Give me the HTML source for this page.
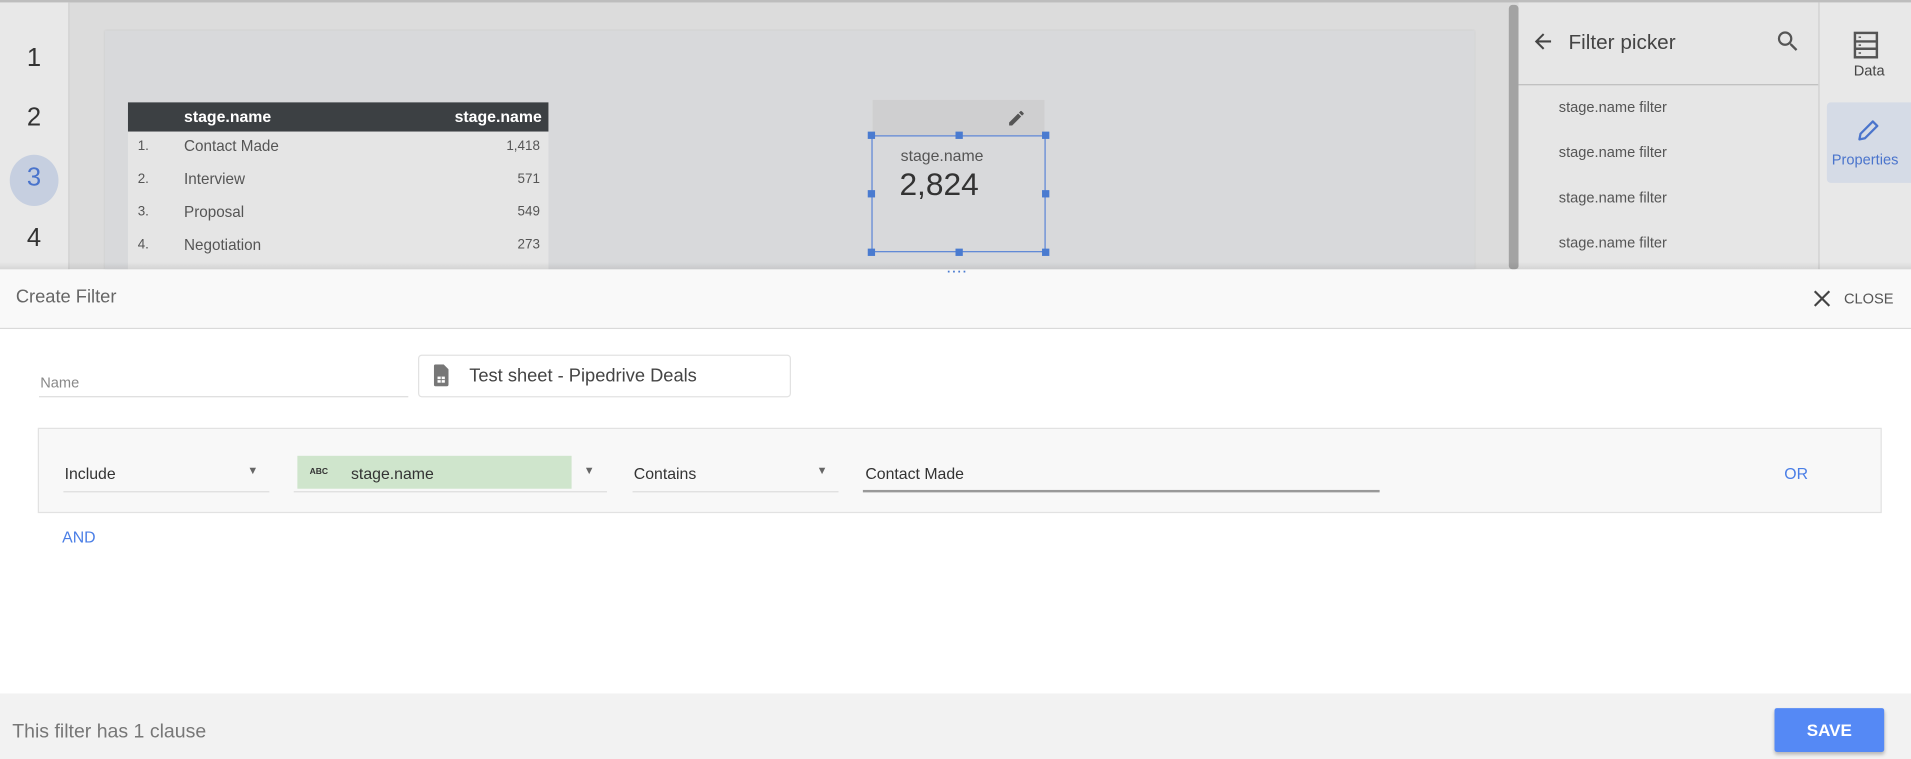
<!DOCTYPE html>
<html><head><meta charset="utf-8"><style>
*{box-sizing:border-box;margin:0;padding:0}
html,body{width:1911px;height:759px;overflow:hidden;background:#fff;font-family:"Liberation Sans",sans-serif}
#w{position:absolute;left:0;top:0;width:1568px;height:623px;transform:scale(1.21875);transform-origin:0 0}
.a{position:absolute}
.t{position:absolute;white-space:nowrap}
</style></head><body><div id="w">
<div class="a" style="left:0;top:0;width:1568px;height:221px;background:#dcdcdc;border-top:2px solid #bdbdbd"></div>
<div class="a" style="left:0;top:2px;width:57px;height:219px;background:#e8e8e8;border-right:1px solid #cfcfcf"></div>
<div class="t" style="left:22px;top:36px;font-size:21px;color:#333">1</div>
<div class="t" style="left:22px;top:85px;font-size:21px;color:#333">2</div>
<div class="a" style="left:8px;top:127px;width:40px;height:42px;border-radius:50%;background:#c6cfe0"></div>
<div class="t" style="left:22px;top:134px;font-size:21px;color:#4a74cc">3</div>
<div class="t" style="left:22px;top:184px;font-size:21px;color:#333">4</div>
<div class="a" style="left:86px;top:25px;width:1124px;height:196px;background:#d8d9db;box-shadow:0 0 2px rgba(0,0,0,.12)"></div>
<div class="a" style="left:105px;top:84px;width:345px;height:24px;background:#3c4043"></div>
<div class="t" style="left:151px;top:88px;font-size:13px;font-weight:bold;color:#fff">stage.name</div>
<div class="t" style="left:373px;top:88px;font-size:13px;font-weight:bold;color:#fff">stage.name</div>
<div class="a" style="left:105px;top:108px;width:345px;height:113px;background:#e5e5e5"></div>
<div class="t" style="left:113px;top:107px;font-size:11px;color:#555;line-height:27px">1.<br>2.<br>3.<br>4.</div>
<div class="t" style="left:151px;top:107px;font-size:12.5px;color:#555;line-height:27px">Contact Made<br>Interview<br>Proposal<br>Negotiation</div>
<div class="t" style="left:400px;top:107px;width:43px;text-align:right;font-size:11px;color:#555;line-height:27px">1,418<br>571<br>549<br>273</div>
<div class="a" style="left:716px;top:82px;width:141px;height:29px;background:#cfcfd0"></div>
<svg class="a" style="left:826px;top:89px" width="16" height="16" viewBox="0 0 24 24"><path d="M3 17.25V21h3.75L17.81 9.94l-3.75-3.75L3 17.25zM20.71 7.04a1 1 0 000-1.41l-2.34-2.34a1 1 0 00-1.41 0l-1.83 1.83 3.75 3.75 1.83-1.83z" fill="#555"/></svg>
<div class="a" style="left:715px;top:111px;width:143px;height:96px;border:1.5px solid #5b85d6"></div>
<div class="a" style="left:712px;top:108px;width:6px;height:6px;background:#4a7bd0"></div>
<div class="a" style="left:784px;top:108px;width:6px;height:6px;background:#4a7bd0"></div>
<div class="a" style="left:855px;top:108px;width:6px;height:6px;background:#4a7bd0"></div>
<div class="a" style="left:712px;top:156px;width:6px;height:6px;background:#4a7bd0"></div>
<div class="a" style="left:855px;top:156px;width:6px;height:6px;background:#4a7bd0"></div>
<div class="a" style="left:712px;top:204px;width:6px;height:6px;background:#4a7bd0"></div>
<div class="a" style="left:784px;top:204px;width:6px;height:6px;background:#4a7bd0"></div>
<div class="a" style="left:855px;top:204px;width:6px;height:6px;background:#4a7bd0"></div>
<div class="t" style="left:739px;top:120px;font-size:13px;color:#555">stage.name</div>
<div class="t" style="left:738px;top:136px;font-size:26px;color:#333">2,824</div>
<div class="a" style="left:1238px;top:4px;width:8px;height:217px;background:#a3a3a3;border-radius:3px"></div>
<div class="a" style="left:1246px;top:2px;width:246px;height:219px;background:#e6e6e6"></div>
<svg class="a" style="left:1256px;top:24px" width="20" height="20" viewBox="0 0 24 24"><path d="M20 11H7.83l5.59-5.59L12 4l-8 8 8 8 1.41-1.41L7.83 13H20v-2z" fill="#444"/></svg>
<div class="t" style="left:1287px;top:25px;font-size:17px;color:#444">Filter picker</div>
<svg class="a" style="left:1456px;top:23px" width="22" height="22" viewBox="0 0 24 24"><path d="M15.5 14h-.79l-.28-.27A6.47 6.47 0 0016 9.5 6.5 6.5 0 109.5 16c1.61 0 3.09-.59 4.230-1.57l.27.28v.79l5 4.99L20.49 19l-4.99-5zm-6 0C7.01 14 5 11.99 5 9.5S7.01 5 9.5 5 14 7.01 14 9.5 11.99 14 9.5 14z" fill="#555"/></svg>
<div class="a" style="left:1246px;top:69px;width:246px;height:1px;background:#bdbdbd"></div>
<div class="t" style="left:1279px;top:70px;font-size:12px;color:#555;line-height:37px">stage.name filter<br>stage.name filter<br>stage.name filter<br>stage.name filter</div>
<div class="a" style="left:1492px;top:2px;width:76px;height:219px;background:#e8e8e8;border-left:1px solid #cfcfcf"></div>
<svg class="a" style="left:1520px;top:25px" width="22" height="24" viewBox="0 0 22 24"><rect x="2" y="2" width="18" height="20" fill="none" stroke="#555" stroke-width="2"/><path d="M2 9h18M2 15h18" stroke="#555" stroke-width="2"/><path d="M5 5.5h2M5 12h2M5 18.5h2" stroke="#555" stroke-width="1.2"/></svg>
<div class="t" style="left:1521px;top:51px;font-size:12px;color:#444">Data</div>
<div class="a" style="left:1499px;top:84px;width:69px;height:66px;background:#d5dbe6;border-radius:3px 0 0 3px"></div>
<svg class="a" style="left:1522px;top:96px" width="22" height="22" viewBox="0 0 24 24"><path d="M4 20l1-5L16 4l4 4L9 19z" fill="none" stroke="#4a74cc" stroke-width="2" stroke-linejoin="round"/></svg>
<div class="t" style="left:1503px;top:124px;font-size:12px;color:#4a74cc">Properties</div>
<div class="a" style="left:0;top:215px;width:1568px;height:6px;background:linear-gradient(rgba(0,0,0,0),rgba(0,0,0,.08))"></div>
<div class="a" style="left:0;top:221px;width:1568px;height:49px;background:#f9f9f9;border-bottom:1px solid #dadada"></div>
<div class="t" style="left:777px;top:218px;font-size:10px;color:#4a7bd0;letter-spacing:1px;font-weight:bold">····</div>
<div class="t" style="left:13px;top:235px;font-size:15px;color:#666">Create Filter</div>
<svg class="a" style="left:1487px;top:237px" width="16" height="16" viewBox="0 0 16 16"><path d="M2 2l12 12M14 2L2 14" stroke="#444" stroke-width="1.8"/></svg>
<div class="t" style="left:1513px;top:238px;font-size:12px;color:#555">CLOSE</div>
<div class="a" style="left:0;top:270px;width:1568px;height:299px;background:#fff"></div>
<div class="t" style="left:33px;top:307px;font-size:12px;color:#888">Name</div>
<div class="a" style="left:32px;top:325px;width:303px;height:1px;background:#ddd"></div>
<div class="a" style="left:343px;top:291px;width:306px;height:35px;border:1px solid #e2e2e2;border-radius:3px"></div>
<svg class="a" style="left:356px;top:299px" width="12" height="18" viewBox="0 0 12 18"><path d="M0 1.5Q0 0 1.5 0H8l4 4v12.5Q12 18 10.5 18h-9Q0 18 0 16.5z" fill="#777"/><rect x="3" y="10" width="6" height="5" fill="#fff"/><path d="M3 12.5h6M6 10v5" stroke="#777" stroke-width=".8"/></svg>
<div class="t" style="left:385px;top:300px;font-size:15px;color:#444">Test sheet - Pipedrive Deals</div>
<div class="a" style="left:31px;top:351px;width:1513px;height:70px;background:#f8f8f8;border:1px solid #e2e2e2"></div>
<div class="t" style="left:53px;top:381px;font-size:13px;color:#333">Include</div>
<div class="t" style="left:203px;top:381px;font-size:9px;color:#666">▼</div>
<div class="a" style="left:52px;top:403px;width:169px;height:1px;background:#ddd"></div>
<div class="a" style="left:244px;top:374px;width:225px;height:27px;background:#cfe5cc"></div>
<div class="t" style="left:254px;top:384px;font-size:7px;font-weight:bold;color:#333">ABC</div>
<div class="t" style="left:288px;top:381px;font-size:13px;color:#333">stage.name</div>
<div class="t" style="left:479px;top:381px;font-size:9px;color:#666">▼</div>
<div class="a" style="left:241px;top:403px;width:257px;height:1px;background:#ddd"></div>
<div class="t" style="left:520px;top:381px;font-size:13px;color:#333">Contains</div>
<div class="t" style="left:670px;top:381px;font-size:9px;color:#666">▼</div>
<div class="a" style="left:519px;top:403px;width:169px;height:1px;background:#ddd"></div>
<div class="t" style="left:710px;top:381px;font-size:13px;color:#333">Contact Made</div>
<div class="a" style="left:708px;top:402px;width:424px;height:1.5px;background:#999"></div>
<div class="t" style="left:1464px;top:381px;font-size:13px;color:#4a7ee6">OR</div>
<div class="t" style="left:51px;top:433px;font-size:13px;color:#4a7ee6">AND</div>
<div class="a" style="left:0;top:569px;width:1568px;height:54px;background:#f2f2f2"></div>
<div class="t" style="left:10px;top:592px;font-size:16px;color:#777">This filter has 1 clause</div>
<div class="a" style="left:1456px;top:581px;width:90px;height:36px;background:#5589f5;border-radius:2px;box-shadow:0 2px 3px rgba(0,0,0,.25)"></div>
<div class="t" style="left:1456px;top:591px;width:90px;text-align:center;font-size:14px;font-weight:bold;color:#fff">SAVE</div>
</div></body></html>
